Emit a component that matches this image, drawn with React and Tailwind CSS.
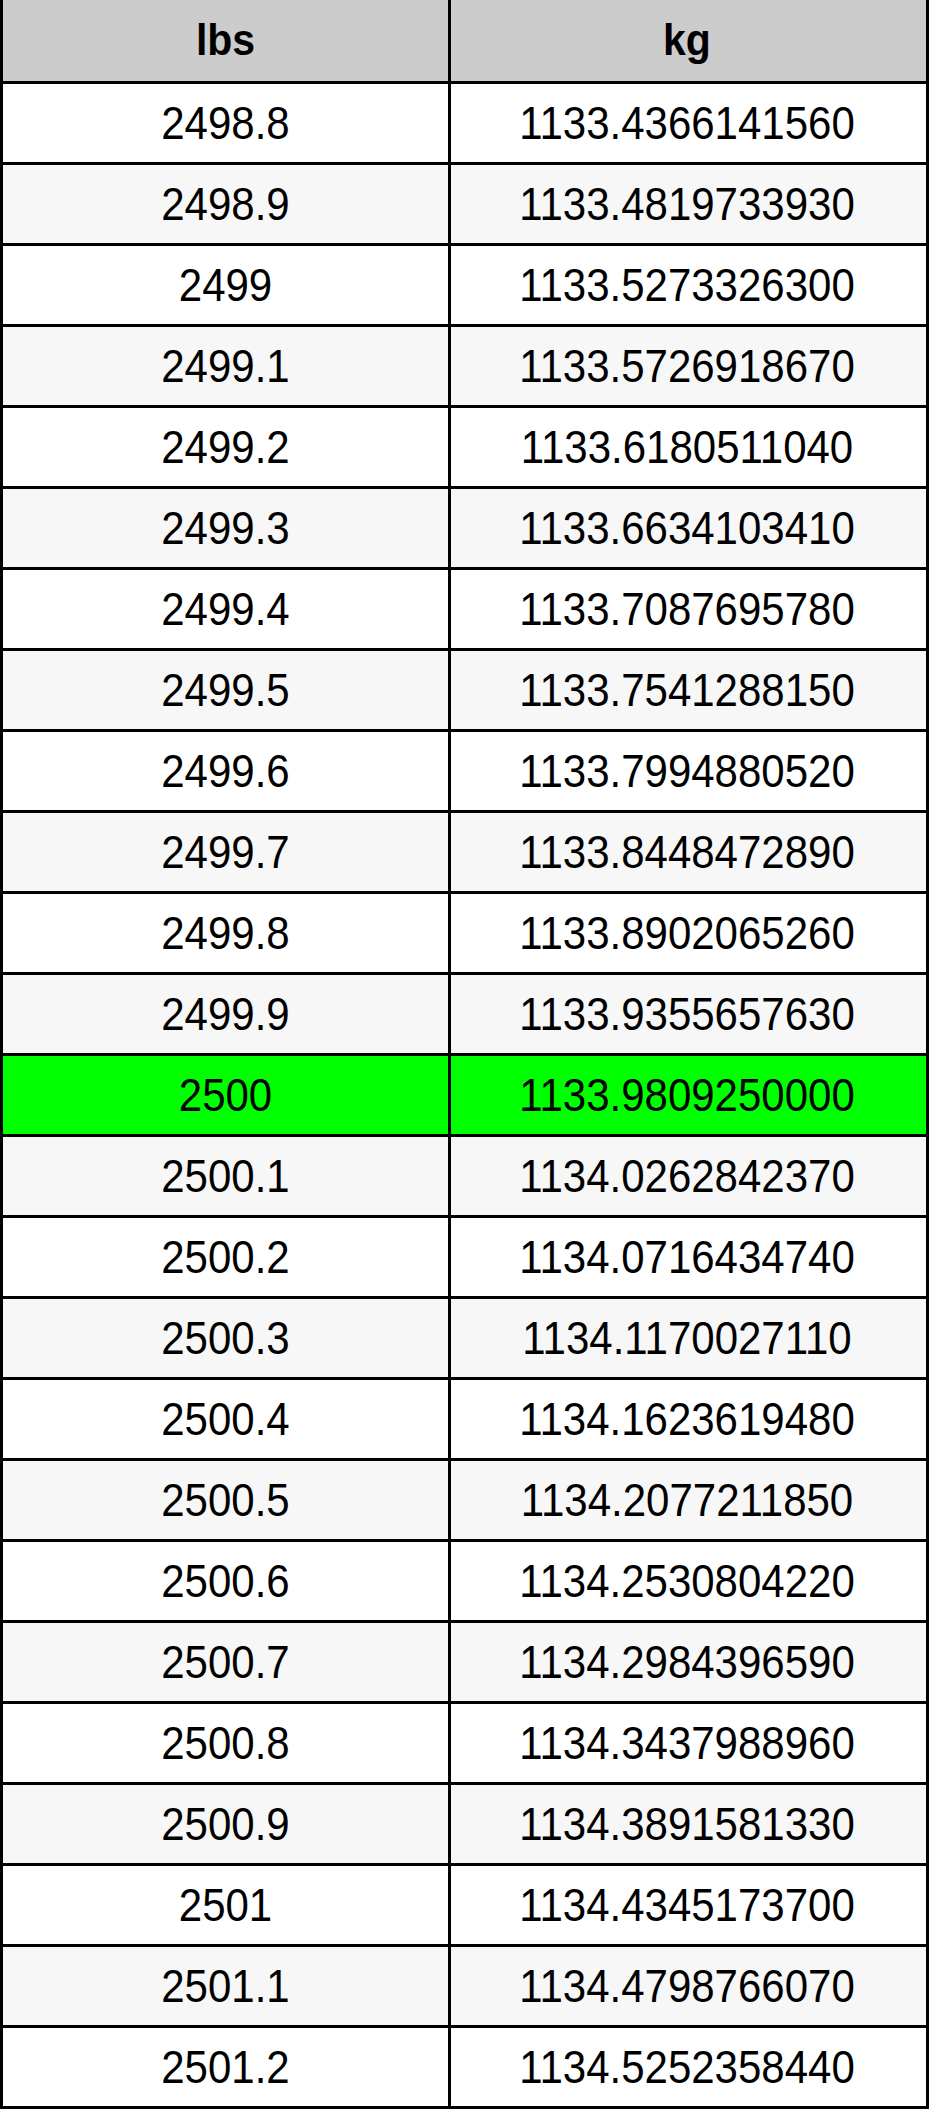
import React from 'react';

const rows = [
  ['2498.8', '1133.4366141560'],
  ['2498.9', '1133.4819733930'],
  ['2499', '1133.5273326300'],
  ['2499.1', '1133.5726918670'],
  ['2499.2', '1133.6180511040'],
  ['2499.3', '1133.6634103410'],
  ['2499.4', '1133.7087695780'],
  ['2499.5', '1133.7541288150'],
  ['2499.6', '1133.7994880520'],
  ['2499.7', '1133.8448472890'],
  ['2499.8', '1133.8902065260'],
  ['2499.9', '1133.9355657630'],
  ['2500', '1133.9809250000'],
  ['2500.1', '1134.0262842370'],
  ['2500.2', '1134.0716434740'],
  ['2500.3', '1134.1170027110'],
  ['2500.4', '1134.1623619480'],
  ['2500.5', '1134.2077211850'],
  ['2500.6', '1134.2530804220'],
  ['2500.7', '1134.2984396590'],
  ['2500.8', '1134.3437988960'],
  ['2500.9', '1134.3891581330'],
  ['2501', '1134.4345173700'],
  ['2501.1', '1134.4798766070'],
  ['2501.2', '1134.5252358440'],
];

const Cell = ({ children, wide }) => (
  <div className={`${wide ? 'w-[475px] border-l-[3px] border-black' : 'w-[445px]'} flex items-center justify-center`}>
    <span className="inline-block scale-y-[1.08]">{children}</span>
  </div>
);

const App = () => {
  return (
    <div className="bg-white min-h-screen font-['Liberation_Sans',Arial,sans-serif] text-black">
      <div className="w-[929px] border-x-[3px] border-black">
        <div className="flex h-[84px] border-b-[3px] border-black bg-[#cccccc] text-[41px] font-bold">
          <Cell>lbs</Cell>
          <Cell wide>kg</Cell>
        </div>
        {rows.map(([lbs, kg], i) => {
          const bg = lbs === '2500' ? 'bg-[#00ff00]' : i % 2 === 0 ? 'bg-white' : 'bg-[#f7f7f7]';
          return (
            <div key={lbs} className={`flex h-[81px] border-b-[3px] border-black text-[42px] ${bg}`}>
              <Cell>{lbs}</Cell>
              <Cell wide>{kg}</Cell>
            </div>
          );
        })}
      </div>
    </div>
  );
};

export default App;
